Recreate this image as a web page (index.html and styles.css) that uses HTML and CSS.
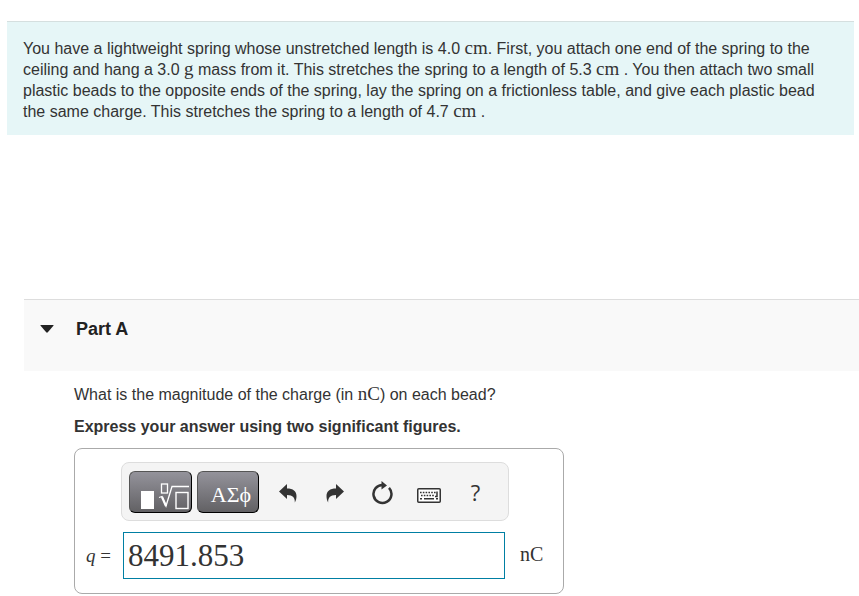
FILE: index.html
```html
<!DOCTYPE html>
<html lang="en">
<head>
    <meta charset="UTF-8">
    <meta name="viewport" content="width=device-width, initial-scale=1.0">
    <title>Part A</title>
    <link rel="stylesheet" href="styles.css">
</head>
<body>
    <section class="problem-intro">
        <p>You have a lightweight spring whose unstretched length is 4.0 <span class="unit">cm</span>. First, you attach one end of the spring to the ceiling and hang a 3.0 <span class="unit">g</span> mass from it. This stretches the spring to a length of 5.3 <span class="unit">cm</span> . You then attach two small plastic beads to the opposite ends of the spring, lay the spring on a frictionless table, and give each plastic bead the same charge. This stretches the spring to a length of 4.7 <span class="unit">cm</span> .</p>
    </section>

    <main class="part">
        <header class="part-header">
            <button class="toggle" type="button" aria-label="Collapse Part A">
                <svg width="14" height="8" viewBox="0 0 14 8"><path d="M1 0h12q1 0 .4.8L7.800 7.300q-.8.700-1.600 0L.6.800Q0 0 1 0z" fill="#222"/></svg>
            </button>
            <h1>Part A</h1>
        </header>

        <div class="part-body">
            <p class="question">What is the magnitude of the charge (in <span class="unit">nC</span>) on each bead?</p>
            <p class="instructions">Express your answer using two significant figures.</p>

            <form class="answer-box">
                <div class="toolbar">
                    <button class="palette-btn" type="button" aria-label="Templates">
                        <svg width="61" height="40" viewBox="0 0 61 40">
                            <rect x="11" y="19" width="13" height="18" fill="#fff"/>
                            <g fill="none" stroke="#fff">
                                <rect x="31.500" y="12" width="6" height="9" stroke-width="1.300"/>
                                <path d="M29 25.500l3-1 4 9.500 6-19.500h17" stroke-width="1.300"/>
                                <path d="M32 25l4 9" stroke-width="2.200"/>
                                <rect x="46" y="20.500" width="12" height="16" stroke-width="1.400"/>
                            </g>
                        </svg>
                    </button>
                    <button class="palette-btn greek" type="button" aria-label="Symbols">ΑΣϕ</button>
                    <button class="icon-btn" type="button" aria-label="Undo">
                        <svg width="18" height="19" viewBox="0 0 18 19"><path d="M0 7.500L8 0v4.500c6 0 9.500 2.500 9.500 7.500 0 2.500-.5 4.800-1.700 6.500.3-4.500-1.800-7.500-7.800-7.500v4z" fill="#333"/></svg>
                    </button>
                    <button class="icon-btn" type="button" aria-label="Redo">
                        <svg width="18" height="19" viewBox="0 0 18 19"><path d="M18 7.500L10 0v4.500C4 4.500.5 7 .5 12c0 2.500.5 4.800 1.700 6.500-.3-4.500 1.800-7.500 7.800-7.500v4z" fill="#333"/></svg>
                    </button>
                    <button class="icon-btn" type="button" aria-label="Reset">
                        <svg width="22" height="24" viewBox="0 0 22 24">
                            <path d="M12 4a9 9 0 1 0 6 2.800" fill="none" stroke="#333" stroke-width="2.500"/>
                            <path d="M10.500 0l5.500 4.500-5.500 4z" fill="#333"/>
                        </svg>
                    </button>
                    <button class="icon-btn keyboard" type="button" aria-label="Keyboard shortcuts">
                        <svg width="24" height="15" viewBox="0 0 24 15">
                            <rect x=".75" y=".75" width="22.500" height="13.500" rx="1" fill="#fff" stroke="#333" stroke-width="1.500"/>
                            <path d="M3 4.500h16M4 7.500h14" stroke="#333" stroke-width="1.600" stroke-dasharray="1.600 1.200"/>
                            <path d="M3 10.800h2M7 10.800h10M19 10.800h2M20 3.500v5h-2" fill="none" stroke="#333" stroke-width="1.500"/>
                        </svg>
                    </button>
                    <button class="icon-btn help" type="button" aria-label="Help">?</button>
                </div>
                <label for="answer"><i>q</i> =</label>
                <input id="answer" type="text" value="8491.853">
                <span class="answer-unit">nC</span>
            </form>
        </div>
    </main>
</body>
</html>
```
FILE: styles.css
```css
* {
    box-sizing: border-box;
    margin: 0;
    padding: 0;
}

body {
    font-family: "Liberation Sans", Arial, sans-serif;
    font-size: 16px;
    line-height: 20px;
    color: #333;
    background-color: #fff;
}

.problem-intro {
    margin: 21px 5px 0 7px;
    padding: 16px 16px 13px;
    line-height: 21px;
    background-color: #e6f6f7;
    border-top: 1px solid #d5dfdf;
}

.unit {
    font-family: "Liberation Serif", "Times New Roman", serif;
    font-size: 19px;
    line-height: 0;
}

.part {
    margin: 164px 0 0 24px;
}

.part-header {
    display: flex;
    align-items: flex-start;
    gap: 22px;
    height: 72px;
    padding: 19px 16px;
    background-color: #f9f9f9;
    border-top: 1px solid #ddd;
}

.toggle {
    display: flex;
    align-items: center;
    height: 20px;
    background: none;
    border: none;
    cursor: pointer;
}

h1 {
    font-size: 18px;
    line-height: 20px;
    color: #222;
}

.part-body {
    padding: 14px 50px 0;
}

.instructions {
    margin: 12px 0 11px;
    font-weight: bold;
}

.answer-box {
    display: grid;
    grid-template-columns: 36px 382px auto;
    column-gap: 12px;
    row-gap: 11px;
    align-items: center;
    width: fit-content;
    padding: 13px 20px 14px 0;
    border: 1px solid #aaa;
    border-radius: 8px;
}

.toolbar {
    grid-column: 2 / 4;
    display: flex;
    align-items: center;
    width: 388px;
    height: 59px;
    margin-left: -2px;
    padding: 0 7px;
    background-color: #f4f4f4;
    border: 1px solid #ddd;
    border-radius: 8px;
}

.palette-btn {
    display: flex;
    align-items: center;
    justify-content: center;
    width: 63px;
    height: 42px;
    margin-right: 5px;
    border: 1px solid #000;
    border-top-color: #555;
    border-left-color: #555;
    border-radius: 6px;
    background: linear-gradient(#94939b, #626164);
    color: #fff;
    cursor: pointer;
}

.greek {
    width: 62px;
    padding: 6px 0 0 6px;
    font-family: "Liberation Serif", "Times New Roman", serif;
    font-size: 22px;
}

.icon-btn {
    display: flex;
    align-items: center;
    justify-content: center;
    width: 47px;
    height: 42px;
    padding-top: 3px;
    background: none;
    border: none;
    color: #333;
    cursor: pointer;
}

.keyboard {
    padding-top: 8px;
}

.help {
    padding-top: 0;
    font-family: "Open Sans", "Noto Sans", sans-serif;
    font-size: 22px;
}

label {
    font-family: "Liberation Serif", "Times New Roman", serif;
    font-size: 19px;
    text-align: right;
    white-space: nowrap;
}

#answer {
    width: 100%;
    height: 47px;
    padding: 0 4px;
    border: 1px solid #007fa3;
    background-color: #fff;
    color: #333;
    font-family: "Liberation Serif", "Times New Roman", serif;
    font-size: 31px;
}

.answer-unit {
    padding: 0 0 4px 3px;
    font-family: "Liberation Serif", "Times New Roman", serif;
    font-size: 20px;
}
```
